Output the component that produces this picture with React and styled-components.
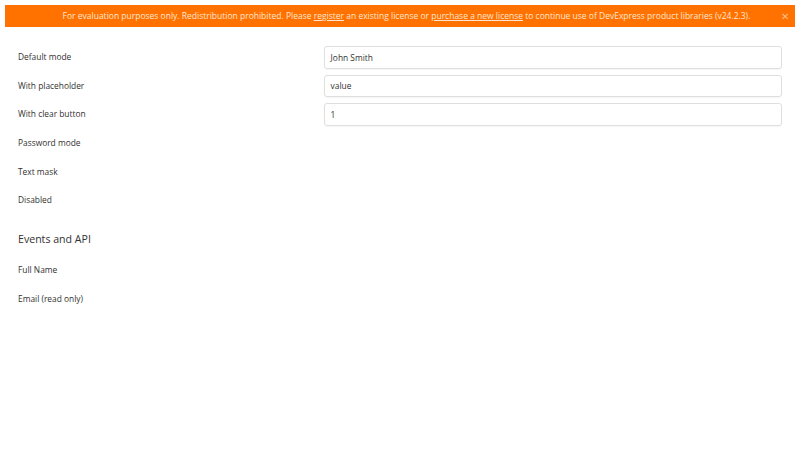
import React from "react";
import styled, { createGlobalStyle } from "styled-components";

const Global = createGlobalStyle`
  html, body { margin: 0; padding: 0; background: #fff; }
  body { font-family: "Open Sans", "Noto Sans", sans-serif; color: #323130; }
`;

const Banner = styled.div`
  margin: 4.5px 5px 0 5px;
  height: 22.5px;
  background: #ff7200;
  display: flex;
  align-items: center;
`;

const BannerText = styled.div`
  flex: 1;
  text-align: center;
  padding-left: 33px;
  font-size: 8.5px;
  color: #ffe6d2;
  white-space: nowrap;
  a { color: inherit; text-decoration: underline; }
`;

const Close = styled.div`
  width: 20px;
  display: flex;
  justify-content: center;
  align-items: center;
  color: #ffbf8c;
  font-size: 10px;
`;

const Page = styled.div`
  padding: 19px 18px 0 18px;
`;

const Form = styled.div`
  display: grid;
  grid-template-columns: 40% 60%;
  row-gap: 6.1px;
  align-items: center;
`;

const Label = styled.div`
  font-size: 8.4px;
  height: 22.6px;
  line-height: 22.6px;
  color: #323130;
`;

const Input = styled.div`
  box-sizing: border-box;
  height: 22.6px;
  border: 1px solid #e1dfdd;
  border-radius: 3px;
  padding: 0 6px;
  font-size: 8.4px;
  display: flex;
  align-items: center;
  color: #323130;
  box-shadow: 0 0.5px 1px rgba(0,0,0,0.04);
`;

const Empty = styled.div``;

const Heading = styled.div`
  font-size: 10.6px;
  color: #323130;
  margin: 19px 0 12px 0;
  line-height: 16px;
`;

const rows = [
  ["Default mode", "John Smith"],
  ["With placeholder", "value"],
  ["With clear button", "1"],
  ["Password mode", null],
  ["Text mask", null],
  ["Disabled", null],
];

const rows2 = [["Full Name", null], ["Email (read only)", null]];

function FormRows({ items }) {
  return (
    <Form>
      {items.map(([label, value]) => (
        <React.Fragment key={label}>
          <Label>{label}</Label>
          {value !== null ? <Input>{value}</Input> : <Empty />}
        </React.Fragment>
      ))}
    </Form>
  );
}

export default function App() {
  return (
    <>
      <Global />
      <Banner>
        <BannerText>
          For evaluation purposes only. Redistribution prohibited. Please <a>register</a> an existing license or <a>purchase a new license</a> to continue use of DevExpress product libraries (v24.2.3).
        </BannerText>
        <Close>✕</Close>
      </Banner>
      <Page>
        <FormRows items={rows} />
        <Heading>Events and API</Heading>
        <FormRows items={rows2} />
      </Page>
    </>
  );
}
